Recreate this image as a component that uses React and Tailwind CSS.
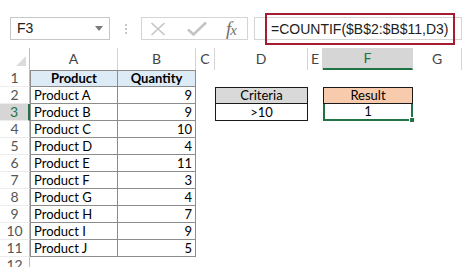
import React from 'react';

const products = [
  ['Product A', 9],
  ['Product B', 9],
  ['Product C', 10],
  ['Product D', 4],
  ['Product E', 11],
  ['Product F', 3],
  ['Product G', 4],
  ['Product H', 7],
  ['Product I', 9],
  ['Product J', 5],
];

const cols = ['A', 'B', 'C', 'D', 'E', 'F', 'G'];
const font = { fontFamily: 'Lato, "Liberation Sans", sans-serif' };

const ColHeader = ({ label, active }) => (
  <div
    className={`flex items-center justify-center border-r border-[#d4d4d4] text-[14px] ${
      active ? 'bg-[#d6d6d6] border-b-2 border-b-[#217346] text-[#217346]' : 'text-[#444]'
    }`}
  >
    {label}
  </div>
);

const RowHeader = ({ n, active }) => (
  <div
    className={`flex items-center justify-center text-[14px] leading-none border-b border-[#ececec] ${
      active ? 'bg-[#d6d6d6] border-r-2 border-r-[#217346] text-[#217346]' : 'text-[#555] border-r border-r-[#bdbdbd]'
    }`}
  >
    {n}
  </div>
);

export default function App() {
  return (
    <div className="relative w-[462px] h-[267px] overflow-hidden bg-white text-black" style={font}>
      {/* formula bar */}
      <div className="h-[48px] flex items-start pt-[17px] pl-[10px]" style={{ fontFamily: '"Liberation Sans", sans-serif' }}>
        <div className="w-[101px] h-[23px] border border-[#c6c6c6] flex items-center justify-between pl-[6px] pr-[6px] text-[14px] text-[#222]">
          <span>F3</span>
          <svg width="8" height="5" viewBox="0 0 8 5"><path d="M0 0h8L4 5z" fill="#7a7a7a" /></svg>
        </div>
        <div className="w-[31px] h-[23px] flex flex-col items-center justify-center gap-[2px]">
          <span className="w-[2px] h-[2px] bg-[#c8c8c8]" />
          <span className="w-[2px] h-[2px] bg-[#c8c8c8]" />
          <span className="w-[2px] h-[2px] bg-[#c8c8c8]" />
        </div>
        <div className="w-[108px] h-[23px] border border-[#d4d4d4] flex items-center">
          <svg width="16" height="14" viewBox="0 0 16 14" className="ml-[8px]">
            <path d="M1.5 1L14.5 13M14.5 1L1.5 13" stroke="#c4c4c4" strokeWidth="1.6" fill="none" />
          </svg>
          <svg width="20" height="15" viewBox="0 0 20 15" className="ml-[21px]">
            <path d="M1 8.5L6.5 13.5L19 1.5" stroke="#c4c4c4" strokeWidth="2.6" fill="none" />
          </svg>
          <span
            className="ml-[19px] text-[19px] italic text-[#707070] leading-none tracking-[-1px]"
            style={{ fontFamily: '"Liberation Serif", serif' }}
          >
            f<span className="text-[15px]">x</span>
          </span>
        </div>
        <div className="ml-[6px] w-[210px] h-[23px] border border-[#d4d4d4]" />
      </div>

      {/* highlighted formula */}
      <div className="absolute left-[265px] top-[13px] w-[190px] h-[32px] border-2 border-[#a51c30] flex items-center pl-[4px] text-[14px] text-[#222]" style={{ fontFamily: '"Liberation Sans", sans-serif' }}>
        =COUNTIF($B$2:$B$11,D3)
      </div>

      {/* sheet grid */}
      <div className="grid grid-cols-[30px_88px_78px_19px_93px_15px_90px_49px] grid-rows-[22px_repeat(12,17px)] text-[13px] leading-none">
        <div className="border-r border-[#bdbdbd] flex items-end justify-end pr-[3px] pb-[4px]">
          <svg width="10" height="10" viewBox="0 0 10 10"><path d="M10 0V10H0z" fill="#dcdcdc" /></svg>
        </div>
        {cols.map((c) => (
          <ColHeader key={c} label={c} active={c === 'F'} />
        ))}

        {/* row 1 */}
        <RowHeader n={1} />
        <div className="bg-[#ddebf7] border border-[#8c8c8c] flex items-center justify-center font-bold">Product</div>
        <div className="bg-[#ddebf7] border-r border-y border-[#8c8c8c] flex items-center justify-center font-bold">Quantity</div>
        <div />
        <div />
        <div />
        <div />
        <div />

        {products.map(([name, qty], i) => {
          const r = i + 2;
          return (
            <React.Fragment key={name}>
              <RowHeader n={r} active={r === 3} />
              <div className="border-x border-b border-[#8c8c8c] flex items-center pl-[3px]">{name}</div>
              <div className="border-r border-b border-[#8c8c8c] flex items-center justify-end pr-[3px]">{qty}</div>
              <div />
              {r === 2 && (
                <div className="bg-[#d9d9d9] border border-[#1a1a1a] flex items-center justify-center">Criteria</div>
              )}
              {r === 3 && (
                <div className="border-x border-b border-[#1a1a1a] flex items-center justify-center">&gt;10</div>
              )}
              {r > 3 && <div />}
              <div />
              {r === 2 && (
                <div className="bg-[#f8cbad] border border-[#1a1a1a] flex items-center justify-center">Result</div>
              )}
              {r === 3 && (
                <div className="relative border-2 border-t-0 border-[#217346] flex items-center justify-center">
                  1
                  <span className="absolute right-[-4px] bottom-[-4px] w-[6px] h-[6px] bg-[#217346] border border-white" />
                </div>
              )}
              {r > 3 && <div />}
              <div />
            </React.Fragment>
          );
        })}

        <RowHeader n={12} />
      </div>
    </div>
  );
}
